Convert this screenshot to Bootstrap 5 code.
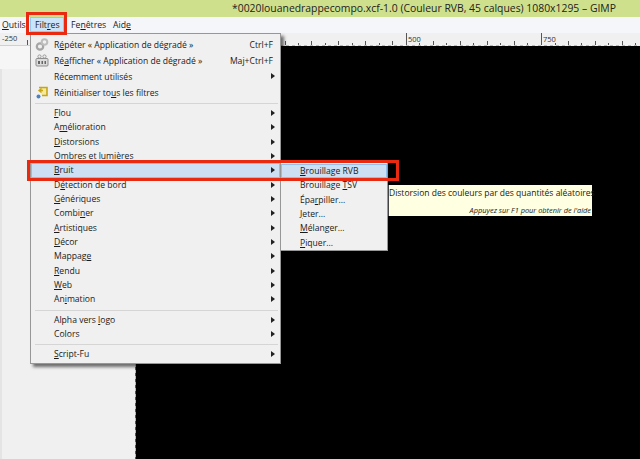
<!DOCTYPE html>
<html lang="fr">
<head>
<meta charset="utf-8">
<title>GIMP</title>
<link href="https://cdn.jsdelivr.net/npm/bootstrap@5.3.0/dist/css/bootstrap.min.css" rel="stylesheet">
<style>
html,body{margin:0;height:459px;overflow:hidden}
body{position:relative;width:640px;background:#f0f0f0;font-family:"Open Sans","Noto Sans",sans-serif;font-size:8.7px;color:#1a1a1a}
.wintitle{height:17px;background:#cfe08c;font-size:10.4px;line-height:17px;padding-left:232px;white-space:nowrap;color:#222}
.menubar{height:16px;background:#f5f6fa;line-height:16px}
.menubar span{display:block;white-space:nowrap}
.m-outils{width:30px;padding-left:2px}
.m-filtres{width:35px;padding-left:5px}
.m-fen{width:44px;padding-left:6px}
.m-aide{padding-left:4px}
.rulerbar{height:13px;display:block;width:640px;background:#f0f0f0}
.rulerbar text{font-family:"Open Sans",sans-serif;font-size:7.5px;fill:#333}
.workspace{height:413px}
.sidearea{width:135px;background:#f0f0f0}
.sidetop{height:23px;background:#f6f6f6}
.sidebody{border-left:2px solid #e4e4e4}
.edgeline{width:1px;background:repeating-linear-gradient(#d8c81e 0 3px,#555 3px 6px)}
.canvasarea{background:#000}
.menupanel.dropdown-menu{display:block;position:absolute;border-radius:0;min-width:0;padding:0;margin:0;background:#f0f0f0;border:1px solid #979797;box-shadow:3px 3px 3px rgba(0,0,0,.55);color:#1a1a1a}
.mainmenu{left:30px;top:33px;width:251px;height:331px;padding-top:3px!important}
.submenu{left:280px;top:162px;width:108px;height:89px;padding-top:1px!important}
.menupanel .dropdown-item{height:14.33px;line-height:14.33px;padding:0 7px 0 23px;font-size:8.6px;color:#1a1a1a;white-space:nowrap;position:relative;background:none;border:0}
.menupanel .tall{height:16px;line-height:16px}
.submenu .dropdown-item{padding-left:19px}
.menupanel .dropdown-divider{margin:3px 2px 2px 4px;border-top:1px solid #d5d5d5;opacity:1}
.menupanel .sep-first{margin-top:2px}
.menupanel u{text-decoration-thickness:1px;text-underline-offset:1px}
.menupanel .hot{background:#cde0f3;outline:1px solid #90c0ee;outline-offset:-1px}
.arrowtip{width:0;height:0;border-left:4px solid #222;border-top:3px solid transparent;border-bottom:3px solid transparent;position:absolute;right:5px;top:4px}
.menuicon{position:absolute;left:4px;top:0}
.hotbar{position:absolute;left:30px;top:17px;width:34px;height:15px;background:#cce4f7;border:1px solid #90c8f6}
.hotbar-text{position:absolute;left:35px;top:17px;line-height:16px}
.redbox{position:absolute;z-index:1100;border:3px solid #ea2a10;background:transparent}
.rb-filtres{left:26px;top:12px;width:41px;height:23px}
.rb-bruit{left:27px;top:160px;width:372px;height:21px}
.hint{position:absolute;z-index:1050;left:388px;top:185px;width:204px;height:31px;background:#ffffe1;border-left:1px solid #444;font-size:8.5px;white-space:nowrap;padding:2px 0 0 0}
.hint-sub{font-size:7.4px;font-style:italic;text-align:right;margin-top:5px;padding-right:1px}
</style>
</head>
<body>
<div class="wintitle">*0020louanedrappecompo.xcf-1.0 (Couleur RVB, 45 calques) 1080x1295 – GIMP</div>
<div class="menubar d-flex">
  <span class="m-outils"><u>O</u>utils</span>
  <span class="m-filtres"></span>
  <span class="m-fen">Fe<u>n</u>êtres</span>
  <span class="m-aide">Aid<u>e</u></span>
</div>
<svg class="rulerbar" viewBox="0 0 640 13" aria-hidden="true">
  <path d="M0 12.5H136" stroke="#d0d0d0"/>
  <path stroke="#555" stroke-width="1" fill="none" d="M27.5 7V12M41.5 10V12M54.5 8V12M285.5 8V12M298.5 10V12M311.5 8V12M325.5 10V12M338.5 8V12M352.5 10V12M365.5 8V12M379.5 10V12M392.5 8V12M406.5 0V12M419.5 10V12M433.5 8V12M446.5 10V12M460.5 8V12M473.5 10V12M487.5 8V12M500.5 10V12M514.5 8V12M527.5 10V12M541.5 0V12M555.5 10V12M568.5 8V12M581.5 10V12M595.5 8V12M608.5 10V12M622.5 8V12M635.5 10V12"/>
  <text x="2" y="8">-250</text><text x="408" y="9">500</text><text x="543" y="9">750</text>
  <path d="M136 12.5H640" stroke="#d8c81e" stroke-dasharray="3 3"/>
</svg>
<div class="workspace d-flex">
  <div class="sidearea d-flex flex-column">
    <div class="sidetop"></div>
    <div class="sidebody flex-grow-1"></div>
  </div>
  <div class="edgeline"></div>
  <div class="canvasarea flex-grow-1"></div>
</div>

<div class="dropdown-menu menupanel mainmenu">
  <div class="dropdown-item tall d-flex"><svg class="menuicon" width="14" height="15" viewBox="0 0 14 15"><circle cx="5" cy="9.5" r="3.2" fill="none" stroke="#a5a5a5" stroke-width="2.2"/><circle cx="9.5" cy="5" r="2.8" fill="none" stroke="#bdbdbd" stroke-width="2"/></svg><span>R<u>é</u>péter « Application de dégradé »</span><span class="ms-auto">Ctrl+F</span></div>
  <div class="dropdown-item tall d-flex"><svg class="menuicon" width="14" height="15" viewBox="0 0 14 15"><rect x="1" y="5.5" width="12" height="7.5" rx="1" fill="#dcdcdc" stroke="#8d8d8d"/><circle cx="4.5" cy="3.5" r="1.6" fill="none" stroke="#9a9a9a"/><circle cx="9.5" cy="3.5" r="1.6" fill="none" stroke="#9a9a9a"/><path d="M3 8h2v3H3zM6.5 8h1.5v3H6.5zM9.5 8h1.5v3H9.5z" fill="#666"/></svg><span>Ré<u>a</u>fficher « Application de dégradé »</span><span class="ms-auto">Maj+Ctrl+F</span></div>
  <div class="dropdown-item tall">Récemment utilisés<i class="arrowtip"></i></div>
  <div class="dropdown-item tall"><svg class="menuicon" width="14" height="15" viewBox="0 0 14 15"><path d="M4 2.5h8v8H7" fill="#f5e9a0" stroke="#c6a516" stroke-width="1.6"/><path d="M8 5.5H4.5M6.5 3.5l-2.5 2 2.5 2" fill="none" stroke="#c6a516" stroke-width="1.4"/><circle cx="3.5" cy="11.5" r="2" fill="#4f80c0"/></svg>Réinitialiser to<u>u</u>s les filtres</div>
  <div class="dropdown-divider sep-first"></div>
  <div class="dropdown-item"><u>F</u>lou<i class="arrowtip"></i></div>
  <div class="dropdown-item">A<u>m</u>élioration<i class="arrowtip"></i></div>
  <div class="dropdown-item"><u>D</u>istorsions<i class="arrowtip"></i></div>
  <div class="dropdown-item">Ombres et lumières<i class="arrowtip"></i></div>
  <div class="dropdown-item hot"><u>B</u>ruit<i class="arrowtip"></i></div>
  <div class="dropdown-item">D<u>é</u>tection de bord<i class="arrowtip"></i></div>
  <div class="dropdown-item"><u>G</u>énériques<i class="arrowtip"></i></div>
  <div class="dropdown-item">Combi<u>n</u>er<i class="arrowtip"></i></div>
  <div class="dropdown-item"><u>A</u>rtistiques<i class="arrowtip"></i></div>
  <div class="dropdown-item"><u>D</u>écor<i class="arrowtip"></i></div>
  <div class="dropdown-item">Mappag<u>e</u><i class="arrowtip"></i></div>
  <div class="dropdown-item"><u>R</u>endu<i class="arrowtip"></i></div>
  <div class="dropdown-item"><u>W</u>eb<i class="arrowtip"></i></div>
  <div class="dropdown-item">An<u>i</u>mation<i class="arrowtip"></i></div>
  <div class="dropdown-divider"></div>
  <div class="dropdown-item">Alpha vers <u>l</u>ogo<i class="arrowtip"></i></div>
  <div class="dropdown-item">Colors<i class="arrowtip"></i></div>
  <div class="dropdown-divider"></div>
  <div class="dropdown-item"><u>S</u>cript-Fu<i class="arrowtip"></i></div>
</div>

<div class="dropdown-menu menupanel submenu">
  <div class="dropdown-item hot"><u>B</u>rouillage RVB</div>
  <div class="dropdown-item">Brouillage <u>T</u>SV</div>
  <div class="dropdown-item">Épa<u>r</u>piller...</div>
  <div class="dropdown-item"><u>J</u>eter...</div>
  <div class="dropdown-item"><u>M</u>élanger...</div>
  <div class="dropdown-item"><u>P</u>iquer...</div>
</div>

<div class="hint">
  <div>Distorsion des couleurs par des quantités aléatoires</div>
  <div class="hint-sub">Appuyez sur F1 pour obtenir de l'aide</div>
</div>

<div class="hotbar"></div>
<div class="hotbar-text">Filt<u>r</u>es</div>
<div class="redbox rb-filtres"></div>
<div class="redbox rb-bruit"></div>
<script src="https://cdn.jsdelivr.net/npm/bootstrap@5.3.0/dist/js/bootstrap.bundle.min.js"></script>
</body>
</html>
